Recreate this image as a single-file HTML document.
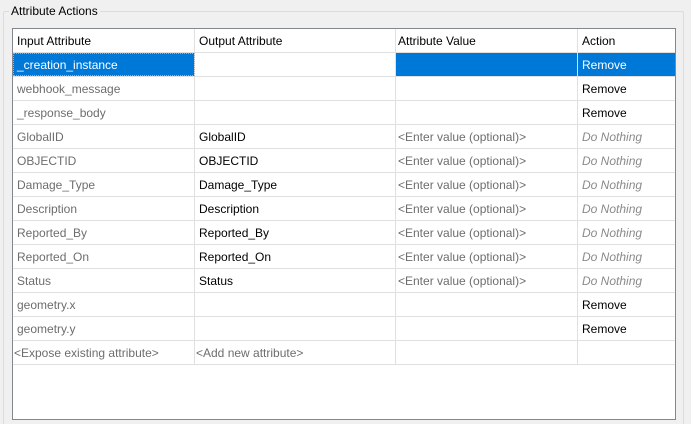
<!DOCTYPE html>
<html style="width:691px;height:424px;overflow:hidden"><head><style>
*{margin:0;padding:0;box-sizing:border-box}
body{width:691px;height:424px;background:#f0f0f0;font-family:"Liberation Sans",sans-serif;font-size:12px;position:relative;overflow:hidden}
.gb{position:absolute;left:3px;top:11px;width:681px;height:413px;border:1px solid #dcdcdc;border-bottom:none;border-radius:2px 2px 0 0}
.lbl{position:absolute;left:9px;top:3px;background:#f0f0f0;padding:0 2px;color:#000;font-size:12px;line-height:16px}
.tbl{position:absolute;left:12px;top:28px;width:664px;height:392px;background:#fff;border:1px solid #828790}
.r{position:absolute;left:0;width:662px;height:24px;border-bottom:1px solid #e0e0e0}
.c{position:absolute;top:0;height:23px;line-height:25px;padding-left:4px;border-right:1px solid #e0e0e0;white-space:nowrap;overflow:hidden}
.c1{left:0;width:182px}.c2{left:182px;width:201px}.c3{left:383px;width:182px;padding-left:2px}.c4{left:565px;width:97px;border-right:none}
.g{color:#6d6d6d}.i{color:#8a8a8a;font-style:italic}
.sel{background:#0078d7;color:#fff}
</style></head><body>
<div class="gb"></div>
<div class="lbl">Attribute Actions</div>
<div class="tbl">
<div class="r" style="top:0"><div class="c c1">Input Attribute</div><div class="c c2">Output Attribute</div><div class="c c3">Attribute Value</div><div class="c c4">Action</div></div>
<div class="r" style="top:24px"><div class="c c1 sel" style="outline:1px dotted #f0a040;outline-offset:-1px">_creation_instance</div><div class="c c2"></div><div class="c c3 sel"></div><div class="c c4 sel">Remove</div></div>
<div class="r" style="top:48px"><div class="c c1 g">webhook_message</div><div class="c c2"></div><div class="c c3"></div><div class="c c4">Remove</div></div>
<div class="r" style="top:72px"><div class="c c1 g">_response_body</div><div class="c c2"></div><div class="c c3"></div><div class="c c4">Remove</div></div>
<div class="r" style="top:96px"><div class="c c1 g">GlobalID</div><div class="c c2">GlobalID</div><div class="c c3 g">&lt;Enter value (optional)&gt;</div><div class="c c4 i">Do Nothing</div></div>
<div class="r" style="top:120px"><div class="c c1 g">OBJECTID</div><div class="c c2">OBJECTID</div><div class="c c3 g">&lt;Enter value (optional)&gt;</div><div class="c c4 i">Do Nothing</div></div>
<div class="r" style="top:144px"><div class="c c1 g">Damage_Type</div><div class="c c2">Damage_Type</div><div class="c c3 g">&lt;Enter value (optional)&gt;</div><div class="c c4 i">Do Nothing</div></div>
<div class="r" style="top:168px"><div class="c c1 g">Description</div><div class="c c2">Description</div><div class="c c3 g">&lt;Enter value (optional)&gt;</div><div class="c c4 i">Do Nothing</div></div>
<div class="r" style="top:192px"><div class="c c1 g">Reported_By</div><div class="c c2">Reported_By</div><div class="c c3 g">&lt;Enter value (optional)&gt;</div><div class="c c4 i">Do Nothing</div></div>
<div class="r" style="top:216px"><div class="c c1 g">Reported_On</div><div class="c c2">Reported_On</div><div class="c c3 g">&lt;Enter value (optional)&gt;</div><div class="c c4 i">Do Nothing</div></div>
<div class="r" style="top:240px"><div class="c c1 g">Status</div><div class="c c2">Status</div><div class="c c3 g">&lt;Enter value (optional)&gt;</div><div class="c c4 i">Do Nothing</div></div>
<div class="r" style="top:264px"><div class="c c1 g">geometry.x</div><div class="c c2"></div><div class="c c3"></div><div class="c c4">Remove</div></div>
<div class="r" style="top:288px"><div class="c c1 g">geometry.y</div><div class="c c2"></div><div class="c c3"></div><div class="c c4">Remove</div></div>
<div class="r" style="top:312px"><div class="c c1 g" style="padding-left:1px">&lt;Expose existing attribute&gt;</div><div class="c c2 g" style="padding-left:1px">&lt;Add new attribute&gt;</div><div class="c c3"></div><div class="c c4"></div></div>
</div>
</body></html>
